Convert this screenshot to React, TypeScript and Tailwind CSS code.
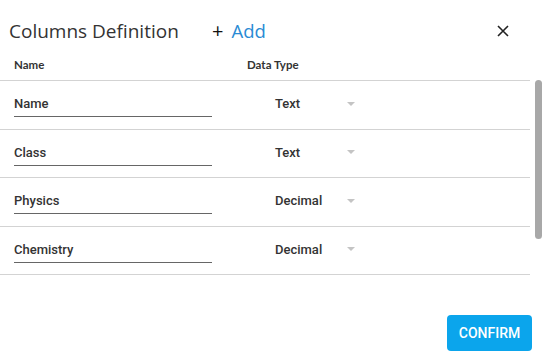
import React from "react";

const rows = [
  { name: "Name", type: "Text" },
  { name: "Class", type: "Text" },
  { name: "Physics", type: "Decimal" },
  { name: "Chemistry", type: "Decimal" },
];

export default function App() {
  return (
    <div className="w-[546px] h-[359px] bg-white overflow-hidden text-[#333]">
      <div className="flex items-center pt-[20px] pl-[9px] h-[42px]">
        <div className="text-[19px] leading-[22px] font-['Open_Sans',sans-serif] text-[#333] w-[203px]">
          Columns Definition
        </div>
        <div className="flex items-center font-['Open_Sans',sans-serif] text-[18.5px] leading-[22px]">
          <span className="text-[#111] text-[20px] mr-[8px]">+</span>
          <span className="text-[#2a8bd4]">Add</span>
        </div>
        <div className="ml-auto mr-[37px] flex items-center">
          <svg width="12" height="12" viewBox="0 0 12 12">
            <path d="M1 1 L11 11 M11 1 L1 11" stroke="#222" strokeWidth="1.6" />
          </svg>
        </div>
      </div>
      <div className="flex">
        <div className="w-[530px]">
          <div className="flex items-center mt-[16px] pb-[8px] border-b border-[#d3d3d3] font-['Lato',sans-serif] font-bold text-[11.5px] leading-[14px] text-[#333]">
            <div className="pl-[14px] w-[247px]">Name</div>
            <div>Data Type</div>
          </div>
          {rows.map((r) => (
            <div key={r.name} className="h-[48.5px] border-b border-[#d3d3d3] flex items-start font-['Roboto',sans-serif] font-medium text-[13px] text-[#333]">
              <div className="ml-[14px] w-[198px] mt-[15px] h-[21px] border-b border-[#666] leading-[16px]">
                {r.name}
              </div>
              <div className="ml-[63px] mt-[15px] flex items-center w-[80px] leading-[16px]">
                <span className="w-[72px]">{r.type}</span>
                <svg width="8" height="5" viewBox="0 0 8 5">
                  <path d="M0 0 L8 0 L4 4 Z" fill="#c4c4c4" />
                </svg>
              </div>
            </div>
          ))}
        </div>
        <div className="ml-[5px] w-[7px] h-[159px] rounded-full bg-[#a8a8a8] mt-[38px]" />
      </div>
      <div className="flex justify-end pr-[14px] mt-[40px]">
        <button className="w-[85px] h-[36px] rounded-[4px] bg-[#0ba5ec] text-white font-['Roboto',sans-serif] font-medium text-[14px]">
          CONFIRM
        </button>
      </div>
    </div>
  );
}
